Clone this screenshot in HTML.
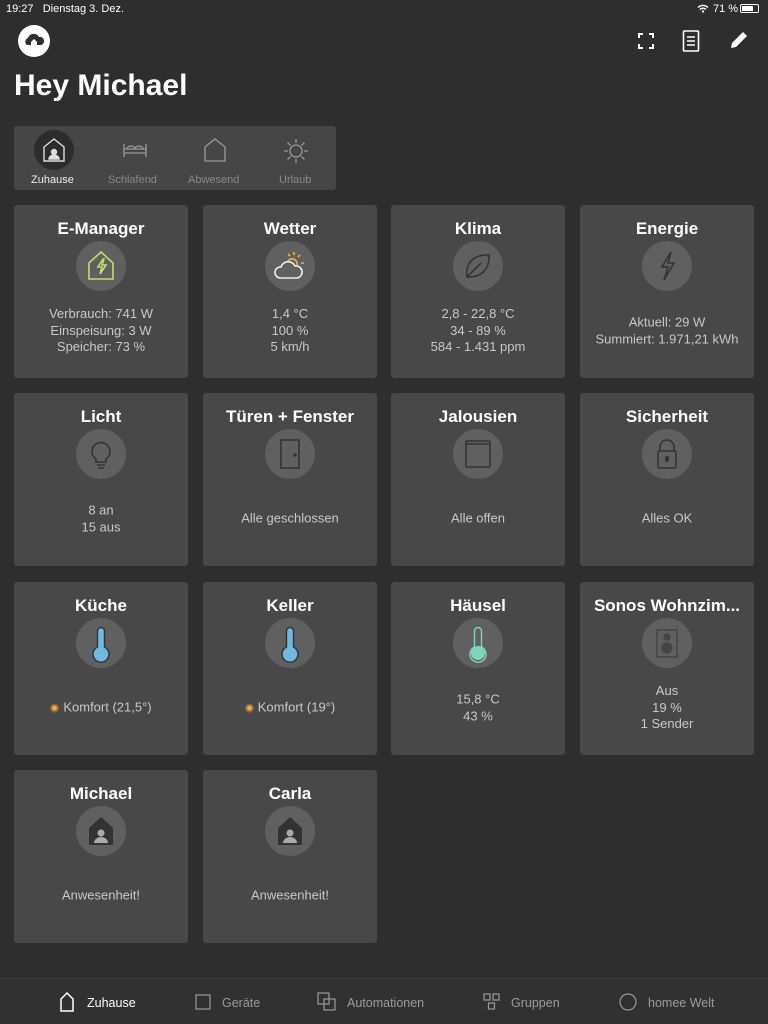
<!DOCTYPE html>
<html><head><meta charset="utf-8"><style>
*{margin:0;padding:0;box-sizing:border-box}
body{width:768px;height:1024px;background:#2e2e2e;font-family:"Liberation Sans",sans-serif;color:#fff;position:relative;overflow:hidden}
.a{position:absolute}
.card{position:absolute;width:174px;height:173px;background:#484848;border-radius:3px}
.card .t{position:absolute;top:14px;left:0;right:0;text-align:center;font-weight:bold;font-size:17px;white-space:nowrap}
.card .c{position:absolute;top:36px;left:62px;width:50px;height:50px;border-radius:50%;background:#606060}
.card .c svg{position:absolute;left:0;top:0}
.card .x{position:absolute;left:0;right:0;top:126px;transform:translateY(-50%);text-align:center;font-size:13px;line-height:16.7px;color:#c8c8c8}
.nav{position:absolute;top:978px;left:0;width:768px;height:46px;background:#313131;border-top:1px solid #3c3c3c}
.nav span{position:absolute;top:17px;font-size:12.5px;color:#9a9a9a}
</style></head><body>
<div class="a" style="left:6px;top:3px;font-size:11px;">19:27&nbsp;&nbsp; Dienstag 3. Dez.</div>
<div class="a" style="left:713px;top:3px;font-size:11px;">71 %</div>
<svg class="a" style="left:697px;top:4px" width="12" height="9" viewBox="0 0 12 9"><path d="M1 3.5a7 7 0 0 1 10 0M3 5.5a4 4 0 0 1 6 0" stroke="#fff" stroke-width="1.4" fill="none"/><circle cx="6" cy="7.5" r="1.2" fill="#fff"/></svg>
<div class="a" style="left:740px;top:4px;width:19px;height:9px;border:1px solid #fff;border-radius:2px"><div style="width:11px;height:5px;background:#fff;margin:1px"></div></div>
<svg class="a" style="left:18px;top:25px" width="32" height="32" viewBox="0 0 32 32"><circle cx="16" cy="16" r="16" fill="#fff"/><path d="M9 20a4 4 0 0 1 1-7 6 6 0 0 1 11-1 4 4 0 0 1 2 8z" fill="#2e2e2e"/><path d="M13 20v-3l3-3 3 3v3z" fill="#fff"/></svg>
<svg class="a" style="left:637px;top:32px" width="18" height="18" viewBox="0 0 18 18" fill="none" stroke="#fff" stroke-width="2"><path d="M2 6V2h4M12 2h4v4M16 12v4h-4M6 16H2v-4"/></svg>
<svg class="a" style="left:682px;top:30px" width="18" height="22" viewBox="0 0 18 22" fill="none" stroke="#fff" stroke-width="1.6"><rect x="1.5" y="1" width="15" height="20" rx="1"/><path d="M5 7h8M5 11h8M5 15h8"/></svg>
<svg class="a" style="left:729px;top:30px" width="20" height="20" viewBox="0 0 20 20"><path d="M2 18l1-5L14 2l4 4L7 17z" fill="#fff"/></svg>
<div class="a" style="left:14px;top:69px;font-size:30px;font-weight:bold">Hey Michael</div>
<div class="a" style="left:14px;top:126px;width:322px;height:64px;background:#464646;border-radius:3px"></div>
<div class="a" style="left:34px;top:130px;width:40px;height:40px;border-radius:50%;background:#2c2c2c"></div>
<svg class="a" style="left:42px;top:137px" width="24" height="26" viewBox="0 0 24 26" fill="none" stroke="#ddd" stroke-width="1.4"><path d="M2 10L12 2l10 8v14H2z"/><circle cx="12" cy="15" r="2.5" fill="#ddd"/><path d="M7 22a5 4 0 0 1 10 0z" fill="#ddd"/></svg>
<svg class="a" style="left:122px;top:140px" width="26" height="18" viewBox="0 0 26 18" fill="none" stroke="#999" stroke-width="1.3"><path d="M2 4v13M24 4v13M2 13h22M2 9h22M5 9a4 3 0 0 1 8 0M13 9a4 3 0 0 1 8 0"/></svg>
<svg class="a" style="left:203px;top:137px" width="24" height="26" viewBox="0 0 24 26" fill="none" stroke="#999" stroke-width="1.3"><path d="M2 10L12 2l10 8v14H2z"/></svg>
<svg class="a" style="left:283px;top:138px" width="26" height="26" viewBox="0 0 26 26" fill="none" stroke="#999" stroke-width="1.3"><circle cx="13" cy="13" r="6"/><path d="M13 1v4M13 21v4M1 13h4M21 13h4M4.5 4.5l3 3M18.5 18.5l3 3M4.5 21.5l3-3M18.5 7.5l3-3"/></svg>
<div class="a" style="left:31px;top:174px;font-size:11px;color:#eee">Zuhause</div>
<div class="a" style="left:108px;top:174px;font-size:11px;color:#8a8a8a">Schlafend</div>
<div class="a" style="left:188px;top:174px;font-size:11px;color:#8a8a8a">Abwesend</div>
<div class="a" style="left:279px;top:174px;font-size:11px;color:#8a8a8a">Urlaub</div>

<div class="card" style="left:14px;top:205px"><div class="t">E-Manager</div><div class="c"><svg width="50" height="50" viewBox="0 0 50 50" fill="none" stroke="#c4dc6a" stroke-width="1.6"><path d="M13 22l12-11 12 11v16H13z"/><path d="M27 18l-5 8h4l-2 7 6-9h-4l2-6z"/></svg></div><div class="x">Verbrauch: 741 W<br>Einspeisung: 3 W<br>Speicher: 73 %</div></div>
<div class="card" style="left:203px;top:205px"><div class="t">Wetter</div><div class="c"><svg width="50" height="50" viewBox="0 0 50 50" fill="none" stroke-width="1.6"><path d="M23 20a5 5 0 0 1 9 4M29 11v3M35 14l-2 2M39 22h-3M23 13l2 2" stroke="#f2b443"/><path d="M15 37a5.5 5.5 0 0 1 1-11 7.5 7.5 0 0 1 14-1 6 6 0 0 1 2 12z" stroke="#eee"/></svg></div><div class="x">1,4 °C<br>100 %<br>5 km/h</div></div>
<div class="card" style="left:391px;top:205px"><div class="t">Klima</div><div class="c"><svg width="50" height="50" viewBox="0 0 50 50" fill="none" stroke="#333" stroke-width="1.6"><path d="M14 36C12 22 21 13 36 14c1 14-8 23-22 22zM14 36l14-14"/></svg></div><div class="x">2,8 - 22,8 °C<br>34 - 89 %<br>584 - 1.431 ppm</div></div>
<div class="card" style="left:580px;top:205px"><div class="t">Energie</div><div class="c"><svg width="50" height="50" viewBox="0 0 50 50" fill="none" stroke="#333" stroke-width="1.6"><path d="M29 11l-9 15h6l-4 13 10-17h-6z"/></svg></div><div class="x">Aktuell: 29 W<br>Summiert: 1.971,21 kWh</div></div>

<div class="card" style="left:14px;top:393px"><div class="t">Licht</div><div class="c"><svg width="50" height="50" viewBox="0 0 50 50" fill="none" stroke="#333" stroke-width="1.6"><path d="M20 30a9 9 0 1 1 10 0v3H20zM21 36h8M22 39h6"/></svg></div><div class="x">8 an<br>15 aus</div></div>
<div class="card" style="left:203px;top:393px"><div class="t">Türen + Fenster</div><div class="c"><svg width="50" height="50" viewBox="0 0 50 50" fill="none" stroke="#333" stroke-width="1.6"><rect x="16" y="11" width="18" height="28"/><circle cx="30" cy="26" r="1" fill="#333"/></svg></div><div class="x">Alle geschlossen</div></div>
<div class="card" style="left:391px;top:393px"><div class="t">Jalousien</div><div class="c"><svg width="50" height="50" viewBox="0 0 50 50" fill="none" stroke="#333" stroke-width="1.6"><rect x="13" y="12" width="24" height="26" rx="1"/><path d="M13 15h24"/></svg></div><div class="x">Alle offen</div></div>
<div class="card" style="left:580px;top:393px"><div class="t">Sicherheit</div><div class="c"><svg width="50" height="50" viewBox="0 0 50 50" fill="none" stroke="#333" stroke-width="1.6"><rect x="16" y="22" width="18" height="17" rx="1.5"/><path d="M18 22v-4a7 7 0 0 1 14 0v4"/><rect x="24" y="28" width="2" height="4" fill="#333"/></svg></div><div class="x">Alles OK</div></div>

<div class="card" style="left:14px;top:582px"><div class="t">Küche</div><div class="c"><svg width="50" height="50" viewBox="0 0 50 50"><path d="M21.5 29V13a3.5 3.5 0 0 1 7 0v16a8 8 0 1 1-7 0z" fill="#6fb8e0" stroke="#333" stroke-width="1.4"/></svg></div><div class="x"><span style="display:inline-block;width:9px;height:9px;border-radius:50%;background:#f2a94a;border:2px solid #8a6a3a;vertical-align:-1px;margin-right:4px"></span>Komfort (21,5°)</div></div>
<div class="card" style="left:203px;top:582px"><div class="t">Keller</div><div class="c"><svg width="50" height="50" viewBox="0 0 50 50"><path d="M21.5 29V13a3.5 3.5 0 0 1 7 0v16a8 8 0 1 1-7 0z" fill="#6fb8e0" stroke="#333" stroke-width="1.4"/></svg></div><div class="x"><span style="display:inline-block;width:9px;height:9px;border-radius:50%;background:#f2a94a;border:2px solid #8a6a3a;vertical-align:-1px;margin-right:4px"></span>Komfort (19°)</div></div>
<div class="card" style="left:391px;top:582px"><div class="t">Häusel</div><div class="c"><svg width="50" height="50" viewBox="0 0 50 50"><path d="M21.5 29V13a3.5 3.5 0 0 1 7 0v16a8 8 0 1 1-7 0z" fill="none" stroke="#7fd4bf" stroke-width="1.4"/><circle cx="25" cy="35" r="7" fill="#7fd4bf"/></svg></div><div class="x">15,8 °C<br>43 %</div></div>
<div class="card" style="left:580px;top:582px"><div class="t">Sonos Wohnzim...</div><div class="c"><svg width="50" height="50" viewBox="0 0 50 50" fill="none" stroke="#444" stroke-width="1.4"><rect x="15" y="12" width="20" height="27"/><circle cx="25" cy="19" r="3" fill="#444"/><circle cx="25" cy="30" r="5" fill="#444"/></svg></div><div class="x">Aus<br>19 %<br>1 Sender</div></div>

<div class="card" style="left:14px;top:770px"><div class="t">Michael</div><div class="c"><svg width="50" height="50" viewBox="0 0 50 50"><path d="M13 22l12-11 12 11v17H13z" fill="#333"/><circle cx="25" cy="27" r="3.5" fill="#aaa"/><path d="M18 37a7 6 0 0 1 14 0z" fill="#aaa"/></svg></div><div class="x">Anwesenheit!</div></div>
<div class="card" style="left:203px;top:770px"><div class="t">Carla</div><div class="c"><svg width="50" height="50" viewBox="0 0 50 50"><path d="M13 22l12-11 12 11v17H13z" fill="#333"/><circle cx="25" cy="27" r="3.5" fill="#aaa"/><path d="M18 37a7 6 0 0 1 14 0z" fill="#aaa"/></svg></div><div class="x">Anwesenheit!</div></div>

<div class="nav">
<svg class="a" style="left:60px;top:13px" width="14" height="20" viewBox="0 0 14 20" fill="none" stroke="#fff" stroke-width="1.5"><path d="M1 7l6-6 6 6v12H1z"/></svg>
<span style="left:87px;color:#fff">Zuhause</span>
<svg class="a" style="left:195px;top:15px" width="16" height="16" viewBox="0 0 16 16" fill="none" stroke="#999" stroke-width="1.2"><rect x="1" y="1" width="14" height="14"/></svg>
<span style="left:222px">Geräte</span>
<svg class="a" style="left:317px;top:13px" width="20" height="20" viewBox="0 0 20 20" fill="none" stroke="#999" stroke-width="1.2"><rect x="1" y="1" width="11" height="11"/><rect x="7" y="7" width="11" height="11"/></svg>
<span style="left:347px">Automationen</span>
<svg class="a" style="left:483px;top:14px" width="18" height="18" viewBox="0 0 18 18" fill="none" stroke="#999" stroke-width="1.2"><rect x="1" y="1" width="6" height="6"/><rect x="10" y="1" width="6" height="6"/><rect x="5.5" y="10" width="6" height="6"/></svg>
<span style="left:511px">Gruppen</span>
<svg class="a" style="left:619px;top:14px" width="18" height="18" viewBox="0 0 18 18" fill="none" stroke="#999" stroke-width="1.2"><circle cx="9" cy="9" r="8"/></svg>
<span style="left:648px">homee Welt</span>
</div>
</body></html>
